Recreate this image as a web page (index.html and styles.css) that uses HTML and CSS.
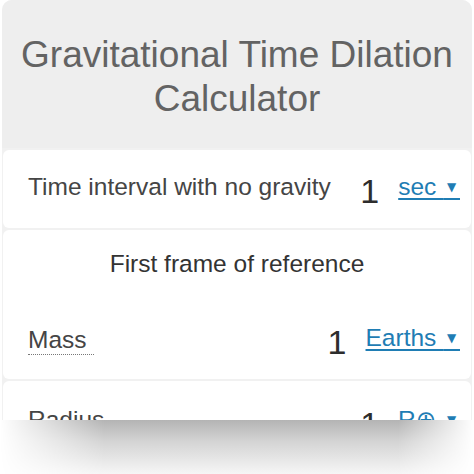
FILE: index.html
```html
<!DOCTYPE html>
<html lang="en">
<head>
    <meta charset="UTF-8">
    <meta name="viewport" content="width=device-width, initial-scale=1.0">
    <title>Gravitational Time Dilation Calculator</title>
    <link rel="stylesheet" href="styles.css">
</head>
<body>
    <div class="calc-card">
        <div class="calc-header">
            <h1>Gravitational Time Dilation Calculator</h1>
        </div>

        <div class="calc-block">
            <div class="calc-row">
                <span class="label">Time interval with no gravity</span>
                <span class="value">1</span>
                <a href="#" class="unit">sec <span class="caret">&nbsp;&#9660;&nbsp;</span></a>
            </div>
        </div>

        <div class="calc-block">
            <div class="block-title">First frame of reference</div>
            <div class="calc-row">
                <span class="label dotted">Mass</span>
                <span class="value">1</span>
                <a href="#" class="unit">Earths <span class="caret">&nbsp;&#9660;&nbsp;</span></a>
            </div>
        </div>

        <div class="calc-block">
            <div class="calc-row calc-row-last">
                <span class="label">Radius</span>
                <span class="value">1</span>
                <a href="#" class="unit">R&#8853; <span class="caret">&nbsp;&#9660;&nbsp;</span></a>
            </div>
        </div>
    </div>
    <div class="card-shadow"></div>
</body>
</html>
```

FILE: styles.css
```css
* {
    box-sizing: border-box;
}

body {
    margin: 0;
    background: #fff;
    font-family: "Liberation Sans", Arial, "DejaVu Sans", sans-serif;
}

.calc-card {
    height: 420px;
    margin: 0 2px;
    overflow: hidden;
    background: #f1f1f1;
    border-radius: 10px 10px 0 0;
    display: flex;
    flex-direction: column;
    gap: 2px;
}

.calc-header {
    background: #eeeeee;
    height: 148px;
    padding: 33px 10px 0;
    flex-shrink: 0;
}

.calc-header h1 {
    margin: 0;
    font-size: 37px;
    line-height: 44px;
    font-weight: normal;
    color: #636363;
    text-align: center;
}

.calc-block {
    background: #fff;
    border-radius: 6px;
    margin: 0 1px;
    flex-shrink: 0;
}

.block-title {
    height: 71px;
    padding-top: 19px;
    font-size: 24.5px;
    line-height: 30px;
    color: #333;
    text-align: center;
}

.calc-row {
    height: 78px;
    display: flex;
    align-items: center;
    padding: 0 11px 5px 25px;
}

.calc-row-last {
    padding-top: 2px;
    height: 80px;
}

.label {
    flex: 1;
    font-size: 24.5px;
    line-height: 30px;
    color: #454545;
}

.label.dotted {
    flex: none;
    border-bottom: 1px dotted #777;
    padding-right: 7px;
    line-height: 28px;
    margin-top: 5px;
}

.dotted + .value {
    margin-left: auto;
}

.value {
    font-size: 34px;
    line-height: 34px;
    color: #2d2d2d;
    margin: 8px 19px 0 0;
}

.unit {
    font-size: 24.5px;
    line-height: 30px;
    color: #1f7db4;
    text-decoration: underline;
    text-decoration-thickness: 2px;
    text-underline-offset: 3px;
}

.caret {
    font-size: 12px;
    font-family: "DejaVu Sans", sans-serif;
    vertical-align: 4px;
}

.card-shadow {
    height: 54px;
    background: linear-gradient(to bottom, #b4b4b4, #d4d4d4 40%, #f6f6f6);
    -webkit-mask-image: linear-gradient(to right, transparent 0, #000 22%, #000 84%, transparent 100%);
    mask-image: linear-gradient(to right, transparent 0, #000 22%, #000 84%, transparent 100%);
}
```
